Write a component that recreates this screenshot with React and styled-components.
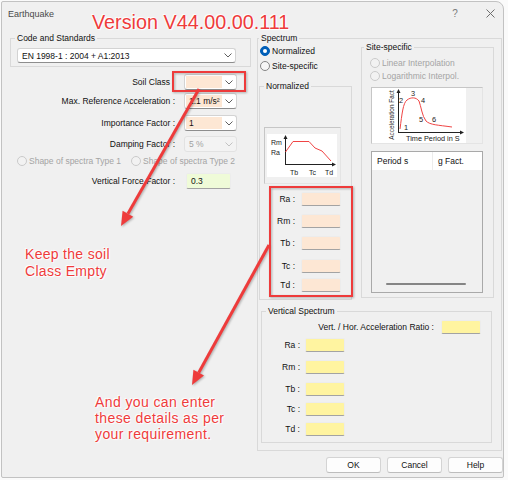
import React from "react";
import styled, { createGlobalStyle } from "styled-components";

const RED = "#ee3b3b";
const PEACH = "#fde7d4";
const YELLOW = "#fff4a0";
const GREEN = "#effbd8";

const GlobalStyle = createGlobalStyle`
  html, body { margin: 0; padding: 0; background: #fafafa; }
  #root { width: 508px; height: 480px; }
`;

const Window = styled.div`
  position: relative;
  box-sizing: border-box;
  width: 503px;
  height: 477px;
  margin: 1px 0 0 1px;
  background: #f0f0f0;
  border: 1px solid #c2c2c2;
  border-radius: 2px 8px 2px 2px;
  display: flex;
  flex-direction: column;
  font-family: "Liberation Sans", Arial, sans-serif;
  font-size: 8.5px;
  color: #111;
`;

const TitleBar = styled.div`
  display: flex;
  align-items: center;
  height: 27px;
  box-sizing: border-box;
  padding: 0 3px 4px 6px;
`;

const Title = styled.span`
  font-size: 9px;
  color: #4a4a4a;
`;

const TitleButton = styled.span`
  width: 20px;
  height: 16px;
  display: flex;
  align-items: center;
  justify-content: center;
  color: #7a7a7a;
  font-size: 10px;
  margin-left: ${(p) => (p.$first ? "auto" : "15px")};
`;

const Body = styled.div`
  display: flex;
  align-items: flex-start;
  padding: 4px 0 0 8px;
`;

const LeftPane = styled.div`
  width: 247px;
  flex-shrink: 0;
`;

const Group = styled.fieldset`
  box-sizing: border-box;
  margin: 0;
  min-inline-size: 0;
  border: 1px solid #d9d9d9;
  width: ${(p) => p.$w}px;
  height: ${(p) => (p.$h ? `${p.$h}px` : "auto")};
  padding: ${(p) => p.$pad};
  margin-top: ${(p) => p.$mt || 0}px;
  margin-left: ${(p) => p.$ml || 0}px;
`;

const Legend = styled.legend`
  padding: 0 2px;
  margin-left: ${(p) => p.$ml || 0}px;
  line-height: 10px;
  font-size: 8.5px;
  color: #111;
`;

const FormRow = styled.div`
  display: flex;
  align-items: center;
  height: ${(p) => p.$h || 16}px;
  margin-top: ${(p) => p.$mt || 0}px;
`;

const FieldLabel = styled.span`
  box-sizing: border-box;
  width: 165px;
  flex-shrink: 0;
  margin-right: 9px;
  padding-right: ${(p) => p.$pr || 0}px;
  text-align: right;
  white-space: nowrap;
`;

const ComboFrame = styled.div`
  box-sizing: border-box;
  width: ${(p) => p.$w}px;
  height: ${(p) => p.$h || 16}px;
  display: flex;
  align-items: stretch;
  padding: 1px;
  background: ${(p) => (p.$disabled ? "#f3f3f3" : "#fff")};
  border: 1px solid ${(p) => (p.$disabled ? "#e2e2e2" : "#d3d3d3")};
  border-bottom-color: ${(p) => (p.$disabled ? "#e2e2e2" : "#8d8d8d")};
  border-radius: 3px;
  color: ${(p) => (p.$disabled ? "#a2a2a2" : "#111")};
`;

const ComboValue = styled.div`
  flex: 1;
  display: flex;
  align-items: center;
  padding-left: ${(p) => p.$pl || 3}px;
  background: ${(p) => p.$fill || "transparent"};
  white-space: nowrap;
  overflow: hidden;
`;

const ChevronCell = styled.div`
  width: 13px;
  display: flex;
  align-items: center;
  justify-content: center;
  flex-shrink: 0;
`;

const Input = styled.div`
  box-sizing: border-box;
  width: ${(p) => p.$w}px;
  height: 100%;
  margin-left: ${(p) => p.$ml || 0}px;
  display: flex;
  align-items: center;
  padding-left: 4px;
  background: ${(p) => p.$bg};
  border: 1px solid #ececec;
  border-bottom-color: #a3a3a3;
  border-radius: 2px;
`;

const RadioGroup = styled.div`
  display: flex;
  align-items: center;
  gap: ${(p) => p.$gap || 0}px;
  height: 12px;
  margin-top: ${(p) => p.$mt || 0}px;
  margin-left: ${(p) => p.$ml || 0}px;
`;

const RadioItem = styled.label`
  display: flex;
  align-items: center;
  gap: 2px;
  white-space: nowrap;
  color: ${(p) => (p.$disabled ? "#a4a4a4" : "#111")};
`;

const RadioDot = styled.span`
  box-sizing: border-box;
  width: 10px;
  height: 10px;
  border-radius: 50%;
  flex-shrink: 0;
  display: flex;
  align-items: center;
  justify-content: center;
  border: 1px solid
    ${(p) => (p.$checked ? "#005fb8" : p.$disabled ? "#cacaca" : "#858585")};
  background: ${(p) =>
    p.$checked ? "#005fb8" : p.$disabled ? "#f2f2f2" : "#f6f6f6"};
  &::after {
    content: "";
    display: ${(p) => (p.$checked ? "block" : "none")};
    width: 4px;
    height: 4px;
    border-radius: 50%;
    background: #fff;
  }
`;

const SpectrumTop = styled.div`
  display: flex;
  align-items: flex-start;
`;

const SpectrumLeft = styled.div`
  width: 93px;
  flex-shrink: 0;
  margin-right: 9px;
`;

const ImageBox = styled.div`
  box-sizing: border-box;
  width: ${(p) => p.$w}px;
  height: ${(p) => p.$h}px;
  margin-top: ${(p) => p.$mt || 0}px;
  padding: ${(p) => p.$pad || 0};
  border: 1px solid #c6c6c6;
  border-right-color: #e4e4e4;
  border-bottom-color: #e4e4e4;
  display: flex;
  align-items: flex-start;
  svg { display: block; }
`;

const NumRow = styled.div`
  display: flex;
  align-items: center;
  height: ${(p) => p.$h || 14}px;
  margin-top: ${(p) => p.$mt || 0}px;
  justify-content: ${(p) => (p.$end ? "flex-end" : "flex-start")};
`;

const NumLabel = styled.span`
  width: ${(p) => (p.$w ? `${p.$w}px` : "auto")};
  flex-shrink: 0;
  text-align: right;
  margin-right: ${(p) => p.$gap}px;
  white-space: nowrap;
`;

const ListView = styled.div`
  box-sizing: border-box;
  width: 112px;
  height: 142px;
  margin-top: 7px;
  border: 1px solid #a9a9a9;
  display: flex;
  flex-direction: column;
`;

const ListHeader = styled.div`
  display: flex;
  height: 18px;
  background: #fff;
`;

const HeaderCell = styled.div`
  width: ${(p) => (p.$w ? `${p.$w}px` : "auto")};
  flex: ${(p) => (p.$w ? "none" : 1)};
  padding-left: 5px;
  display: flex;
  align-items: center;
  border-right: ${(p) => (p.$w ? "1px solid #ececec" : "none")};
`;

const ScrollBar = styled.div`
  margin: auto 0 7px 14px;
  width: 80px;
  height: 2px;
  border-radius: 1px;
  background: #858585;
`;

const Footer = styled.div`
  display: flex;
  justify-content: flex-end;
  gap: 6px;
  margin-top: 6px;
`;

const Button = styled.button`
  box-sizing: border-box;
  width: 55px;
  height: 16px;
  padding: 0;
  font-family: inherit;
  font-size: 8.5px;
  color: #111;
  background: #fdfdfd;
  border: 1px solid #d4d4d4;
  border-bottom-color: #bdbdbd;
  border-radius: 3px;
`;

const Overlay = styled.svg`
  position: absolute;
  left: -2px;
  top: -2px;
  pointer-events: none;
  overflow: visible;
  filter: drop-shadow(1px 1px 1px rgba(0, 0, 0, 0.28));
`;

const Note = styled.div`
  position: absolute;
  left: ${(p) => p.$x}px;
  top: ${(p) => p.$y}px;
  font-family: "Liberation Sans", Arial, sans-serif;
  font-size: ${(p) => p.$size}px;
  line-height: ${(p) => p.$lh}px;
  letter-spacing: ${(p) => p.$ls || 0}px;
  color: ${RED};
  white-space: pre;
  text-shadow: 0 0 1px #fff, 0 0 2px #fff, 1px 1px 1px #fff, -1px -1px 1px #fff;
`;

function Chevron({ color = "#5f5f5f" }) {
  return (
    <svg width="8" height="5" viewBox="0 0 8 5">
      <polyline points="0.5,0.5 4,4 7.5,0.5" fill="none" stroke={color} strokeWidth="1" />
    </svg>
  );
}

function Combo({ w = 53, h, value = "", fill, disabled, pl }) {
  return (
    <ComboFrame $w={w} $h={h} $disabled={disabled}>
      <ComboValue $fill={fill} $pl={pl}>{value}</ComboValue>
      <ChevronCell>
        <Chevron color={disabled ? "#c2c2c2" : "#5f5f5f"} />
      </ChevronCell>
    </ComboFrame>
  );
}

function Radio({ label, checked, disabled }) {
  return (
    <RadioItem $disabled={disabled}>
      <RadioDot $checked={checked} $disabled={disabled} />
      {label}
    </RadioItem>
  );
}

function NormalizedChart() {
  return (
    <svg width="70" height="43" viewBox="0 0 70 43">
      <rect width="70" height="43" fill="#fff" />
      <line x1="18.5" y1="30" x2="18.5" y2="4" stroke="#222" />
      <path d="M16.5 5 L18.5 1 L20.5 5 Z" fill="#222" />
      <line x1="18" y1="30.5" x2="66" y2="30.5" stroke="#222" />
      <path d="M65 28.5 L69 30.5 L65 32.5 Z" fill="#222" />
      <polyline points="18.5,18 26,7.5 42,7.5 48,14 55,17 64,27" fill="none" stroke="#f04545" strokeWidth="1" />
      <g fontFamily="Liberation Sans, Arial, sans-serif" fontSize="7" fill="#222">
        <text x="4" y="10.5">Rm</text>
        <text x="4" y="20.5">Ra</text>
        <text x="23" y="40.5">Tb</text>
        <text x="42" y="40.5">Tc</text>
        <text x="58" y="40.5">Td</text>
      </g>
    </svg>
  );
}

function SiteChart() {
  return (
    <svg width="94" height="55" viewBox="0 0 94 55">
      <rect width="94" height="55" fill="#fff" />
      <line x1="26.5" y1="44" x2="26.5" y2="4" stroke="#222" />
      <path d="M24.5 5 L26.5 1 L28.5 5 Z" fill="#222" />
      <line x1="26" y1="44.5" x2="89" y2="44.5" stroke="#222" />
      <path d="M88 42.5 L92 44.5 L88 46.5 Z" fill="#222" />
      <path
        d="M28 41 C30 26 31 15 35 12 C39 9 44 9 47 13 C49 18 50 28 54 33 C58 37 66 37 80 39"
        fill="none"
        stroke="#f04545"
        strokeWidth="1"
      />
      <g fontFamily="Liberation Sans, Arial, sans-serif" fill="#222">
        <text transform="translate(21.5 27) rotate(-90)" textAnchor="middle" fontSize="6.4">
          Acceleration Fact
        </text>
        <text x="34" y="52.5" fontSize="7.3">Time Period in S</text>
        <g fontSize="7.4">
          <text x="32" y="42">1</text>
          <text x="27" y="15">2</text>
          <text x="39" y="8">3</text>
          <text x="49" y="15">4</text>
          <text x="47" y="34">5</text>
          <text x="60" y="34">6</text>
        </g>
      </g>
    </svg>
  );
}

function Arrow({ x1, y1, tip, base, c1, c2 }) {
  return (
    <g>
      <line x1={x1} y1={y1} x2={base[0]} y2={base[1]} stroke={RED} strokeWidth="3" />
      <polygon points={`${tip[0]},${tip[1]} ${c1[0]},${c1[1]} ${c2[0]},${c2[1]}`} fill={RED} />
    </g>
  );
}

const normalizedRows = [
  { label: "Ra :", mt: 8 },
  { label: "Rm :", mt: 8 },
  { label: "Tb :", mt: 8 },
  { label: "Tc :", mt: 9 },
  { label: "Td :", mt: 5 },
];

const verticalRows = [
  { label: "Ra :", mt: 4 },
  { label: "Rm :", mt: 8 },
  { label: "Tb :", mt: 8 },
  { label: "Tc :", mt: 6 },
  { label: "Td :", mt: 6 },
];

export default function App() {
  return (
    <>
      <GlobalStyle />
      <Window>
        <TitleBar>
          <Title>Earthquake</Title>
          <TitleButton $first>?</TitleButton>
          <TitleButton>
            <svg width="9" height="9" viewBox="0 0 9 9">
              <path d="M0.5 0.5 L8.5 8.5 M8.5 0.5 L0.5 8.5" stroke="#6e6e6e" strokeWidth="1" />
            </svg>
          </TitleButton>
        </TitleBar>

        <Body>
          <LeftPane>
            <Group $w={241} $pad="5px 13px 3px 6px">
              <Legend $ml={-2}>Code and Standards</Legend>
              <Combo w={219} h={15} value="EN 1998-1 : 2004 + A1:2013" />
            </Group>

            <FormRow $mt={7}>
              <FieldLabel $pr={5}>Soil Class</FieldLabel>
              <Combo fill={PEACH} />
            </FormRow>
            <FormRow $mt={3}>
              <FieldLabel>Max. Reference Acceleration :</FieldLabel>
              <Combo fill={PEACH} value="1.1 m/s²" />
            </FormRow>
            <FormRow $mt={6}>
              <FieldLabel>Importance Factor :</FieldLabel>
              <Combo fill={PEACH} value="1" />
            </FormRow>
            <FormRow $mt={5}>
              <FieldLabel>Damping Factor :</FieldLabel>
              <Combo disabled value="5 %" />
            </FormRow>
            <RadioGroup $mt={3} $ml={7} $gap={10}>
              <Radio disabled label="Shape of spectra Type 1" />
              <Radio disabled label="Shape of spectra Type 2" />
            </RadioGroup>
            <FormRow $mt={6}>
              <FieldLabel>Vertical Force Factor :</FieldLabel>
              <Input $w={45} $bg={GREEN} $ml={2}>0.3</Input>
            </FormRow>
          </LeftPane>

          <Group $w={245} $h={418} $pad="0 0 0 1px">
            <Legend>Spectrum</Legend>
            <SpectrumTop>
              <SpectrumLeft>
                <RadioGroup $mt={2} $ml={1}>
                  <Radio checked label="Normalized" />
                </RadioGroup>
                <RadioGroup $mt={3} $ml={1}>
                  <Radio label="Site-specific" />
                </RadioGroup>
                <Group $w={93} $h={219} $mt={9} $pad="0 0 0 4px">
                  <Legend>Normalized</Legend>
                  <ImageBox $w={77} $h={57} $mt={36} $pad="6px 2px 5px 2px">
                    <NormalizedChart />
                  </ImageBox>
                  {normalizedRows.map((r) => (
                    <NumRow key={r.label} $mt={r.mt}>
                      <NumLabel $w={31} $gap={6}>{r.label}</NumLabel>
                      <Input $w={40} $bg={PEACH} />
                    </NumRow>
                  ))}
                </Group>
              </SpectrumLeft>

              <Group $w={133} $h={256} $mt={-1} $pad="0 0 4px 9px">
                <Legend $ml={-7}>Site-specific</Legend>
                <RadioGroup $mt={5} $ml={-1}>
                  <Radio disabled label="Linear Interpolation" />
                </RadioGroup>
                <RadioGroup $mt={1} $ml={-1}>
                  <Radio disabled label="Logarithmic Interpol." />
                </RadioGroup>
                <ImageBox $w={112} $h={57} $mt={5}>
                  <SiteChart />
                </ImageBox>
                <ListView>
                  <ListHeader>
                    <HeaderCell $w={55}>Period s</HeaderCell>
                    <HeaderCell>g Fact.</HeaderCell>
                  </ListHeader>
                  <ScrollBar />
                </ListView>
              </Group>
            </SpectrumTop>

            <Group $w={231} $mt={6} $ml={2} $pad="0 10px 6px 1px">
              <Legend $ml={3}>Vertical Spectrum</Legend>
              <NumRow $mt={4} $end>
                <NumLabel $gap={7}>Vert. / Hor. Acceleration Ratio :</NumLabel>
                <Input $w={40} $bg={YELLOW} />
              </NumRow>
              {verticalRows.map((r) => (
                <NumRow key={r.label} $mt={r.mt}>
                  <NumLabel $w={37} $gap={5}>{r.label}</NumLabel>
                  <Input $w={40} $bg={YELLOW} />
                </NumRow>
              ))}
            </Group>
          </Group>
        </Body>

        <Footer>
          <Button>OK</Button>
          <Button>Cancel</Button>
          <Button>Help</Button>
        </Footer>

        {/* annotations drawn over the dialog */}
        <Overlay width="508" height="480" viewBox="0 0 508 480">
          <rect x="173" y="72" width="72" height="19" fill="none" stroke={RED} strokeWidth="2" />
          <rect x="270" y="187" width="82" height="109" fill="none" stroke={RED} strokeWidth="2" />
          <Arrow x1={199} y1={89} tip={[121, 226]} base={[127.9, 213.8]} c1={[133.2, 216.8]} c2={[122.6, 210.8]} />
          <Arrow x1={269} y1={245} tip={[192, 385]} base={[198.7, 372.7]} c1={[204, 375.6]} c2={[193.4, 369.8]} />
        </Overlay>
        <Note $x={90} $y={9} $size={19.8} $lh={23}>Version V44.00.00.111</Note>
        <Note $x={23} $y={244} $size={14} $lh={17} $ls={0.3}>{"Keep the soil\nClass Empty"}</Note>
        <Note $x={93} $y={392} $size={14} $lh={16} $ls={0.4}>
          {"And you can enter\nthese details as per\nyour requirement."}
        </Note>
      </Window>
    </>
  );
}
